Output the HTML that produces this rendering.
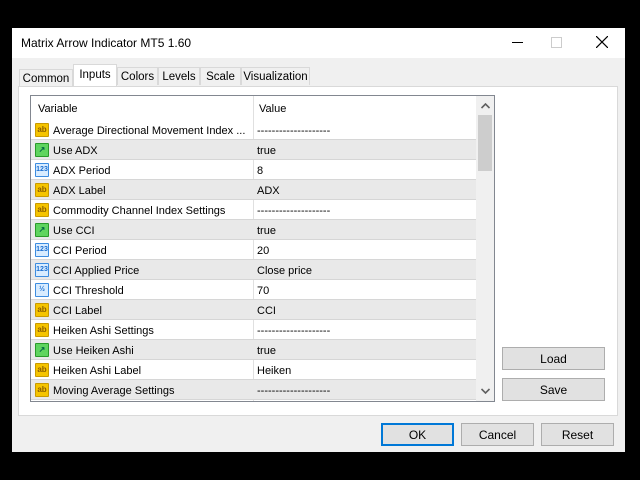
<!DOCTYPE html><html><head><style>
body{margin:0;width:640px;height:480px;background:#000;position:relative;overflow:hidden;font-family:"Liberation Sans",sans-serif;font-size:11px;color:#000}
.a{position:absolute}
.win{left:12px;top:28px;width:613px;height:424px;background:#f0f0f0}
.title{left:0;top:0;width:613px;height:30px;background:#fff}
.tab{top:39px;height:18px;border:1px solid #d9d9d9;border-bottom:none;background:#f0f0f0;text-align:center;line-height:19px;font-size:11.5px;box-sizing:border-box}
.panel{left:6px;top:58px;width:598px;height:328px;background:#fff;border:1px solid #d9d9d9}
.list{left:30px;top:95px;width:463px;height:305px;border:1px solid #828790;background:#fff;overflow:hidden}
.row{position:absolute;left:0;width:445px;height:19px;border-bottom:1px solid #d6d6d6;line-height:22px}
.row.g{background:#e9e9e9}
.row span.n{position:absolute;left:22px}
.row span.v{position:absolute;left:226px}
.sep{position:absolute;left:222px;top:0;width:1px;height:305px;background:#e0e0e0}
.ic{position:absolute;left:4px;top:3px;width:14px;height:14px;font-size:8px;line-height:14px;text-align:center;font-weight:bold;border-radius:1px;font-style:normal}
.ab{background:#f5c400;color:#8a5c00;border:1px solid #c89a00;width:12px;height:12px;line-height:12px}
.bo{background:#5fd45f;color:#064;border:1px solid #2a9a2a;width:12px;height:12px;line-height:12px}
.nu{background:#d8ecff;color:#1c6fd0;border:1px solid #3d8de0;width:12px;height:12px;line-height:12px;font-size:7px}
.btn{height:21px;border:1px solid #adadad;background:#e1e1e1;text-align:center;line-height:22px;font-size:12px}
</style></head><body>
<div class="a win">
 <div class="a title"><div class="a" style="left:9px;top:8px;font-size:12px">Matrix Arrow Indicator MT5 1.60</div>
  <div class="a" style="left:500px;top:14px;width:11px;height:1px;background:#000"></div>
  <div class="a" style="left:539px;top:9px;width:9px;height:9px;border:1px solid #ccc"></div>
  <svg class="a" style="left:584px;top:8px" width="12" height="12"><path d="M0 0L12 12M12 0L0 12" stroke="#000" stroke-width="1.2"/></svg>
 </div>
 <div class="a tab" style="left:7px;top:41px;height:17px;width:54px">Common</div>
 <div class="a tab" style="left:61px;top:36px;width:44px;height:23px;background:#fff;line-height:20px">Inputs</div>
 <div class="a tab" style="left:105px;width:41px">Colors</div>
 <div class="a tab" style="left:146px;width:42px">Levels</div>
 <div class="a tab" style="left:188px;width:41px">Scale</div>
 <div class="a tab" style="left:229px;width:69px">Visualization</div>
 <div class="a panel"></div>
 <div class="a btn" style="left:490px;top:319px;width:101px">Load</div>
 <div class="a btn" style="left:490px;top:350px;width:101px">Save</div>
 <div class="a btn" style="left:369px;top:395px;width:69px;border:2px solid #0078d7;height:19px;line-height:20px">OK</div>
 <div class="a btn" style="left:449px;top:395px;width:71px">Cancel</div>
 <div class="a btn" style="left:529px;top:395px;width:71px">Reset</div>
</div>
<div class="a list">
 <div class="sep"></div>
 <div class="row" style="top:0;height:24px;line-height:27px;border-bottom:none"><span class="n" style="left:7px">Variable</span><span class="v" style="left:228px">Value</span></div>
 <div class="a" style="left:445px;top:0;width:18px;height:305px;background:#f0f0f0"></div>
 <div class="a" style="left:447px;top:19px;width:14px;height:56px;background:#cdcdcd"></div>
 <svg class="a" style="left:450px;top:7px" width="9" height="6"><path d="M0.5 5L4.5 1L8.5 5" stroke="#606060" stroke-width="1.6" fill="none"/></svg>
 <svg class="a" style="left:450px;top:292px" width="9" height="6"><path d="M0.5 1L4.5 5L8.5 1" stroke="#606060" stroke-width="1.6" fill="none"/></svg>
 <div class="row" style="top:24px"><i class="ic ab">ab</i><span class="n">Average Directional Movement Index ...</span><span class="v">--------------------</span></div>
 <div class="row g" style="top:44px"><i class="ic bo">↗</i><span class="n">Use ADX</span><span class="v">true</span></div>
 <div class="row" style="top:64px"><i class="ic nu">123</i><span class="n">ADX Period</span><span class="v">8</span></div>
 <div class="row g" style="top:84px"><i class="ic ab">ab</i><span class="n">ADX Label</span><span class="v">ADX</span></div>
 <div class="row" style="top:104px"><i class="ic ab">ab</i><span class="n">Commodity Channel Index Settings</span><span class="v">--------------------</span></div>
 <div class="row g" style="top:124px"><i class="ic bo">↗</i><span class="n">Use CCI</span><span class="v">true</span></div>
 <div class="row" style="top:144px"><i class="ic nu">123</i><span class="n">CCI Period</span><span class="v">20</span></div>
 <div class="row g" style="top:164px"><i class="ic nu">123</i><span class="n">CCI Applied Price</span><span class="v">Close price</span></div>
 <div class="row" style="top:184px"><i class="ic nu">½</i><span class="n">CCI Threshold</span><span class="v">70</span></div>
 <div class="row g" style="top:204px"><i class="ic ab">ab</i><span class="n">CCI Label</span><span class="v">CCI</span></div>
 <div class="row" style="top:224px"><i class="ic ab">ab</i><span class="n">Heiken Ashi Settings</span><span class="v">--------------------</span></div>
 <div class="row g" style="top:244px"><i class="ic bo">↗</i><span class="n">Use Heiken Ashi</span><span class="v">true</span></div>
 <div class="row" style="top:264px"><i class="ic ab">ab</i><span class="n">Heiken Ashi Label</span><span class="v">Heiken</span></div>
 <div class="row g" style="top:284px"><i class="ic ab">ab</i><span class="n">Moving Average Settings</span><span class="v">--------------------</span></div>
</div>
</body></html>
